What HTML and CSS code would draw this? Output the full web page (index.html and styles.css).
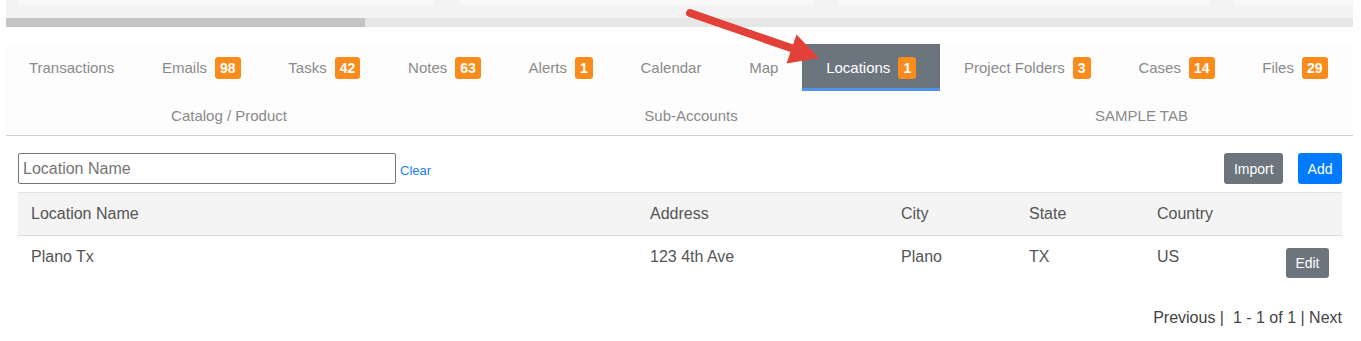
FILE: index.html
```html
<!DOCTYPE html>
<html>
<head>
<meta charset="utf-8">
<link rel="stylesheet" href="styles.css">
</head>
<body>
<div class="page">
  <div class="topstrip">
    <div class="cards">
      <div class="card c1"></div>
      <div class="card c2"></div>
      <div class="card c3"></div>
      <div class="card c4"></div>
    </div>
    <div class="scrollbar"><div class="thumb"></div></div>
  </div>

  <div class="tabs">
    <div class="tabrow">
      <div class="tab">Transactions</div>
      <div class="tab">Emails <span class="badge">98</span></div>
      <div class="tab">Tasks <span class="badge">42</span></div>
      <div class="tab">Notes <span class="badge">63</span></div>
      <div class="tab">Alerts <span class="badge">1</span></div>
      <div class="tab">Calendar</div>
      <div class="tab">Map</div>
      <div class="tab active">Locations <span class="badge">1</span></div>
      <div class="tab">Project Folders <span class="badge">3</span></div>
      <div class="tab">Cases <span class="badge">14</span></div>
      <div class="tab">Files <span class="badge">29</span></div>
    </div>
    <div class="subrow">
      <div class="subtab">Catalog / Product</div>
      <div class="subtab">Sub-Accounts</div>
      <div class="subtab">SAMPLE TAB</div>
    </div>
  </div>

  <div class="content">
    <div class="toolbar">
      <div class="search">
        <input class="search-input" type="text" placeholder="Location Name">
        <a class="clear">Clear</a>
      </div>
      <div class="actions">
        <button class="btn btn-gray">Import</button>
        <button class="btn btn-blue">Add</button>
      </div>
    </div>

    <div class="grid head">
      <div class="cell">Location Name</div>
      <div class="cell">Address</div>
      <div class="cell">City</div>
      <div class="cell">State</div>
      <div class="cell">Country</div>
      <div class="cell"></div>
    </div>
    <div class="grid row">
      <div class="cell">Plano Tx</div>
      <div class="cell">123 4th Ave</div>
      <div class="cell">Plano</div>
      <div class="cell">TX</div>
      <div class="cell">US</div>
      <div class="cell edit-cell"><button class="btn btn-gray btn-edit">Edit</button></div>
    </div>

    <div class="pager">Previous |&nbsp; 1 - 1 of 1 | Next</div>
  </div>
</div>

<svg class="arrow" width="1361" height="341" viewBox="0 0 1361 341">
  <line x1="690" y1="13" x2="794" y2="49" stroke="#e2413a" stroke-width="8" stroke-linecap="round"/>
  <polygon points="819,58 786.5,63.5 796.5,34.5" fill="#e2413a"/>
</svg>
</body>
</html>
```

FILE: styles.css
```css
html, body {
  margin: 0;
  padding: 0;
  background: #ffffff;
}
body {
  font-family: "Liberation Sans", Arial, sans-serif;
  width: 1361px;
  height: 341px;
  overflow: hidden;
  position: relative;
}
.page {
  margin-left: 6px;
  width: 1347px;
}
.topstrip {
  background: #f3f3f3;
}
.cards {
  height: 18px;
  position: relative;
}
.card {
  position: absolute;
  top: 0;
  height: 5px;
  background: #f8f8f8;
  border-radius: 0 0 3px 3px;
}
.c1 { left: 12px; width: 416px; }
.c2 { left: 453px; width: 355px; }
.c3 { left: 832px; width: 372px; }
.c4 { left: 1227px; width: 120px; }
.scrollbar {
  height: 9px;
  background: #e6e6e6;
}
.thumb {
  width: 359px;
  height: 9px;
  background: #c4c4c4;
}

.tabs {
  margin-top: 17px;
  border-bottom: 1px solid #cfcfcf;
  background: #fdfdfd;
}
.tabrow {
  display: flex;
  margin-left: -1px;
}
.tab {
  display: flex;
  align-items: center;
  gap: 8px;
  padding: 13px 23.9px 9px;
  height: 22px;
  font-size: 15px;
  line-height: 22px;
  color: #8a8a8a;
  border-bottom: 3px solid transparent;
  white-space: nowrap;
}
.tab.active {
  background: #6c757d;
  color: #ffffff;
  border-bottom-color: #4d94ea;
}
.badge {
  display: inline-block;
  background: #fb8c1c;
  color: #ffffff;
  font-weight: bold;
  font-size: 14px;
  line-height: 22px;
  height: 22px;
  padding: 0 5px;
  border-radius: 3px;
}
.subrow {
  display: grid;
  grid-template-columns: 446px 478px 1fr;
}
.subtab {
  text-align: center;
  font-size: 15px;
  line-height: 22px;
  color: #8a8a8a;
  padding: 14px 0 8px;
}

.content {
  padding: 0 11px 0 12px;
}
.toolbar {
  margin-top: 17px;
  display: flex;
  align-items: center;
  justify-content: space-between;
  height: 31px;
}
.search {
  display: flex;
  align-items: center;
}
.search-input {
  box-sizing: border-box;
  width: 378px;
  height: 31px;
  border: 1px solid #767676;
  border-radius: 2px;
  padding: 1px 4px 0;
  font-family: "Liberation Sans", Arial, sans-serif;
  font-size: 16px;
  color: #333;
  outline: none;
}
.search-input::placeholder {
  color: #757575;
}
.clear {
  margin-left: 4px;
  margin-top: 3px;
  font-size: 13px;
  color: #1a7ff0;
  cursor: pointer;
}
.actions {
  display: flex;
  gap: 15px;
}
.btn {
  height: 31px;
  border: none;
  border-radius: 3px;
  padding: 0 9.5px;
  font-family: "Liberation Sans", Arial, sans-serif;
  font-size: 14px;
  color: #ffffff;
  cursor: pointer;
}
.btn-gray { background: #6c757d; }
.btn-blue { background: #007bff; }

.grid {
  display: grid;
  grid-template-columns: 619px 251px 128px 128px 1fr 69px;
  font-size: 16px;
  line-height: 22px;
  color: #555555;
}
.head {
  margin-top: 8px;
  background: #f4f4f4;
  border-top: 1px solid #e2e2e2;
  border-bottom: 1px solid #dcdcdc;
  height: 42px;
}
.head .cell {
  padding: 10px 13px;
}
.row {
  height: 44px;
}
.row .cell {
  padding: 10px 13px 0;
}
.edit-cell {
  display: flex;
  justify-content: flex-end;
}
.btn-edit {
  margin-top: 2px;
  height: 30px;
}
.pager {
  margin-top: 27px;
  text-align: right;
  font-size: 16px;
  line-height: 22px;
  color: #444444;
}

.arrow {
  position: absolute;
  left: 0;
  top: 0;
  pointer-events: none;
}
```
